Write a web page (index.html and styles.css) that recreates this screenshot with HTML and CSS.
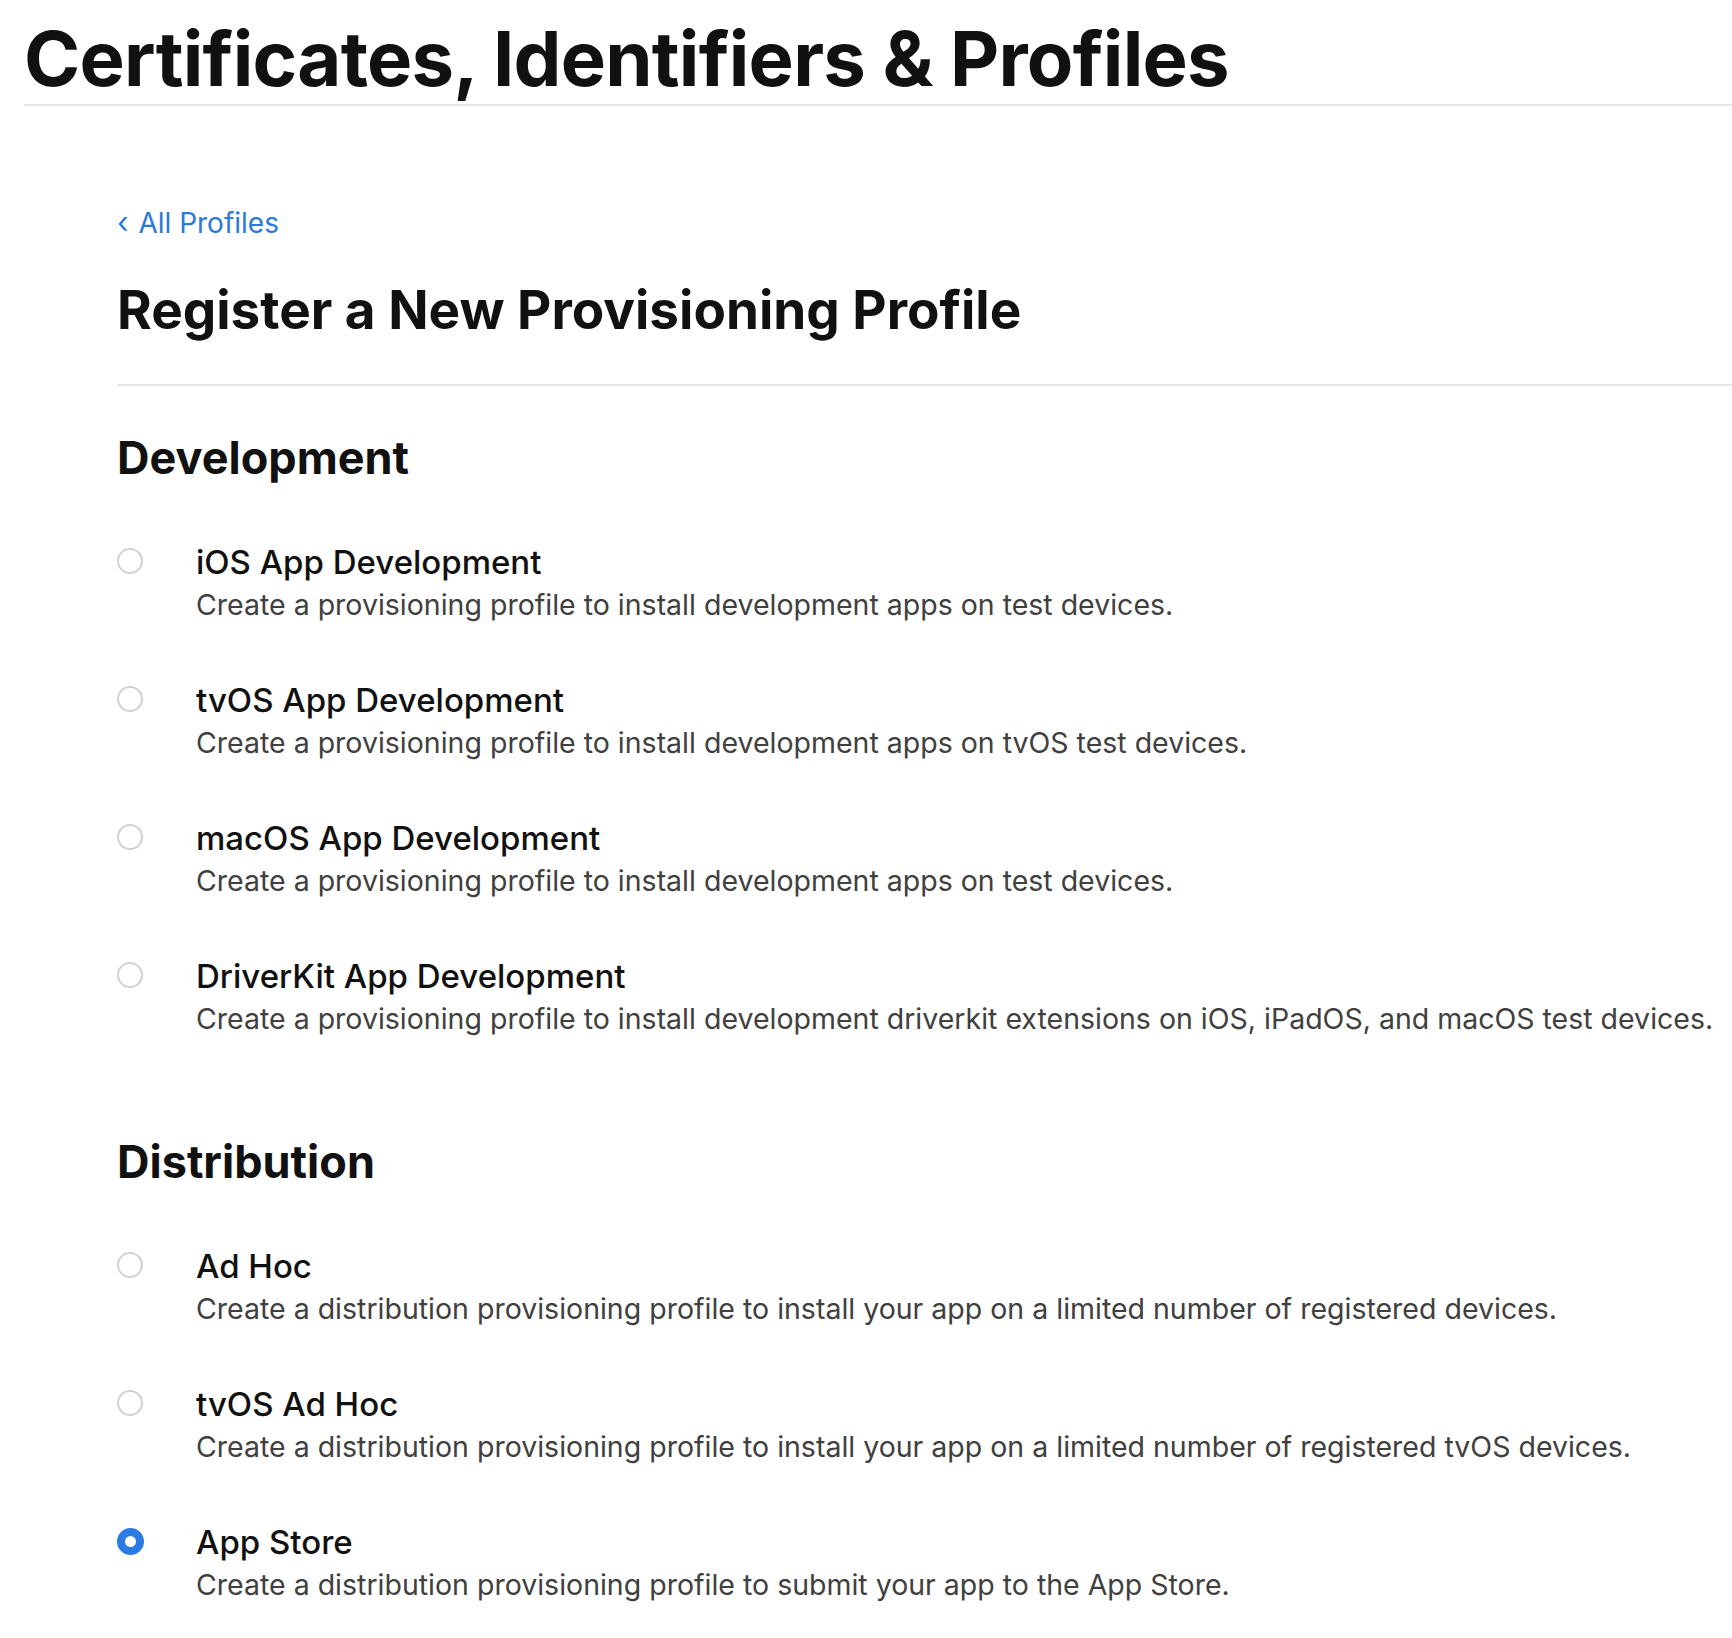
FILE: index.html
```html
<!DOCTYPE html>
<html lang="en">
<head>
<meta charset="utf-8">
<title>Certificates, Identifiers &amp; Profiles</title>
<link rel="stylesheet" href="styles.css">
</head>
<body>
<header class="page-header">
  <h1 class="page-title">Certificates, Identifiers &amp; Profiles</h1>
</header>
<main class="content">
  <a class="back-link" href="#"><span class="chev">‹</span> All Profiles</a>
  <div class="form-head">
    <h2 class="form-title">Register a New Provisioning Profile</h2>
  </div>

  <section class="group">
    <h3 class="group-title">Development</h3>
    <div class="options">
      <label class="option">
        <span class="radio"></span>
        <span class="option-text">
          <span class="option-title">iOS App Development</span>
          <span class="option-desc">Create a provisioning profile to install development apps on test devices.</span>
        </span>
      </label>
      <label class="option">
        <span class="radio"></span>
        <span class="option-text">
          <span class="option-title">tvOS App Development</span>
          <span class="option-desc">Create a provisioning profile to install development apps on tvOS test devices.</span>
        </span>
      </label>
      <label class="option">
        <span class="radio"></span>
        <span class="option-text">
          <span class="option-title">macOS App Development</span>
          <span class="option-desc">Create a provisioning profile to install development apps on test devices.</span>
        </span>
      </label>
      <label class="option">
        <span class="radio"></span>
        <span class="option-text">
          <span class="option-title">DriverKit App Development</span>
          <span class="option-desc">Create a provisioning profile to install development driverkit extensions on iOS, iPadOS, and macOS test devices.</span>
        </span>
      </label>
    </div>
  </section>

  <section class="group group-dist">
    <h3 class="group-title">Distribution</h3>
    <div class="options">
      <label class="option">
        <span class="radio"></span>
        <span class="option-text">
          <span class="option-title">Ad Hoc</span>
          <span class="option-desc">Create a distribution provisioning profile to install your app on a limited number of registered devices.</span>
        </span>
      </label>
      <label class="option">
        <span class="radio"></span>
        <span class="option-text">
          <span class="option-title">tvOS Ad Hoc</span>
          <span class="option-desc">Create a distribution provisioning profile to install your app on a limited number of registered tvOS devices.</span>
        </span>
      </label>
      <label class="option">
        <span class="radio checked"></span>
        <span class="option-text">
          <span class="option-title">App Store</span>
          <span class="option-desc">Create a distribution provisioning profile to submit your app to the App Store.</span>
        </span>
      </label>
    </div>
  </section>
</main>
</body>
</html>
```
FILE: styles.css
```css
* { box-sizing: border-box; }
html, body { margin: 0; padding: 0; background: #fff; }
body {
  font-family: Inter, "Noto Sans", "Liberation Sans", sans-serif;
  color: #1d1d1f;
  overflow: hidden;
}
.page-header {
  margin-left: 24px;
  padding-top: 13px;
  padding-bottom: 1px;
  border-bottom: 2px solid #e6e6e6;
}
.page-title {
  margin: 0;
  font-size: 76px;
  line-height: 90px;
  font-weight: 700;
  letter-spacing: -0.75px;
  color: #111;
  white-space: nowrap;
}
.content {
  padding-left: 117px;
}
.back-link {
  display: inline-block;
  margin-top: 100px;
  font-size: 28px;
  line-height: 32px;
  color: #2a7ad8;
  text-decoration: none;
}
.back-link .chev { font-size: 30px; margin-right: 2px; }
.form-head {
  margin-top: 37px;
  padding-bottom: 40px;
  border-bottom: 2px solid #e6e6e6;
}
.form-title {
  margin: 0;
  font-size: 53px;
  line-height: 68px;
  font-weight: 700;
  color: #111;
}
.group { margin-top: 44px; }
.group-dist { margin-top: 92px; }
.group-title {
  margin: 0;
  font-size: 45px;
  line-height: 56px;
  font-weight: 700;
  color: #111;
}
.options {
  margin-top: 56px;
  display: flex;
  flex-direction: column;
  gap: 52px;
}
.option {
  display: grid;
  grid-template-columns: 79px 1fr;
  align-items: start;
}
.radio {
  margin-top: 6px;
  width: 26px;
  height: 26px;
  border-radius: 50%;
  border: 2px solid #d2d2d2;
  background: #fff;
}
.radio.checked {
  width: 27px;
  height: 27px;
  border: 8.5px solid #2a7be4;
  background: #fff;
}
.option-text { display: flex; flex-direction: column; }
.option-title {
  font-size: 33px;
  line-height: 40px;
  font-weight: 500;
  color: #111;
}
.option-desc {
  font-size: 28.5px;
  line-height: 46px;
  color: #404040;
  white-space: nowrap;
}
```
